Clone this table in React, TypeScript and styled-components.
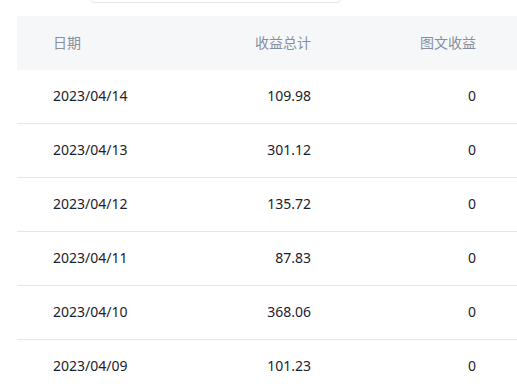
import React from "react";
import styled, { createGlobalStyle } from "styled-components";

const Global = createGlobalStyle`
  html, body { margin: 0; padding: 0; background: #fff; overflow: hidden; }
  body { font-family: "Noto Sans", "Noto Sans CJK SC", sans-serif; }
`;

const Page = styled.div`
  width: 517px;
  height: 388px;
  overflow: hidden;
  padding-left: 17px;
  box-sizing: border-box;
`;

const SearchBox = styled.div`
  margin-top: -29px;
  margin-left: 73px;
  width: 251px;
  height: 32px;
  box-sizing: border-box;
  border: 1px solid #e5e6eb;
  border-radius: 4px;
  background: #fff;
`;

const Table = styled.table`
  margin-top: 13px;
  border-collapse: separate;
  border-spacing: 0;
  table-layout: fixed;
  width: 660px;
  font-size: 14px;
`;

const Th = styled.th<{ $align: "left" | "right" }>`
  width: 165px;
  height: 54px;
  box-sizing: border-box;
  padding: 0 36px 2px;
  background: #f6f7f9;
  color: #86909c;
  font-weight: 400;
  text-align: ${(p) => p.$align};
  border-radius: 2px 2px 0 0;
`;

const Td = styled.td<{ $align: "left" | "right" }>`
  height: 54px;
  box-sizing: border-box;
  padding: 0 36px 2px;
  color: #1d2129;
  text-align: ${(p) => p.$align};
  border-bottom: 1px solid #e5e6eb;
`;

const rows = [
  ["2023/04/14", "109.98", "0"],
  ["2023/04/13", "301.12", "0"],
  ["2023/04/12", "135.72", "0"],
  ["2023/04/11", "87.83", "0"],
  ["2023/04/10", "368.06", "0"],
  ["2023/04/09", "101.23", "0"],
];

export default function App() {
  return (
    <Page>
      <Global />
      <SearchBox />
      <Table>
        <thead>
          <tr>
            <Th $align="left">日期</Th>
            <Th $align="right">收益总计</Th>
            <Th $align="right">图文收益</Th>
            <Th $align="right"></Th>
          </tr>
        </thead>
        <tbody>
          {rows.map((r) => (
            <tr key={r[0]}>
              <Td $align="left">{r[0]}</Td>
              <Td $align="right">{r[1]}</Td>
              <Td $align="right">{r[2]}</Td>
              <Td $align="right"></Td>
            </tr>
          ))}
        </tbody>
      </Table>
    </Page>
  );
}
